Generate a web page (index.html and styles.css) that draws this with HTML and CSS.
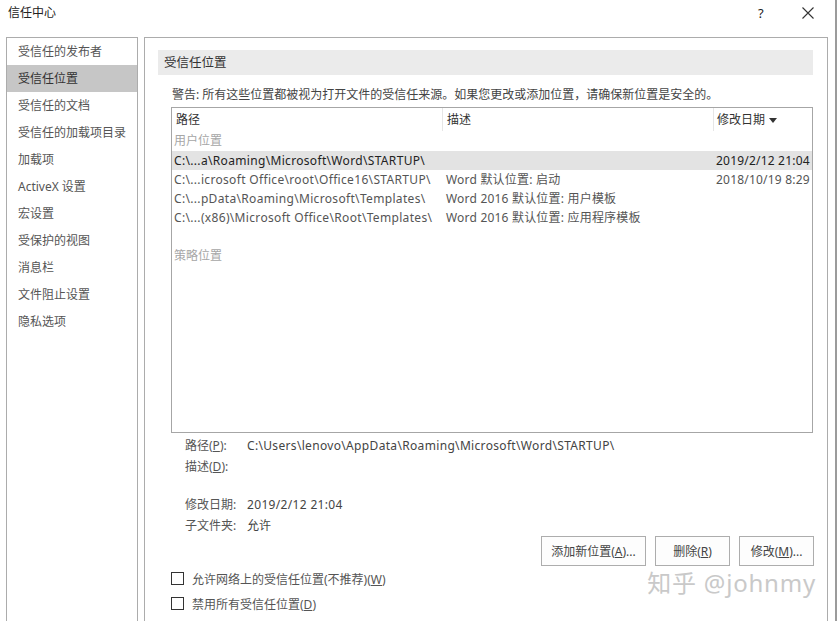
FILE: index.html
```html
<!DOCTYPE html>
<html lang="zh-CN">
<head>
<meta charset="utf-8">
<title>信任中心</title>
<link rel="stylesheet" href="styles.css">
</head>
<body>
<div class="window">
  <div class="titlebar">
    <span class="title">信任中心</span>
    <span class="help">?</span>
    <span class="close"><svg width="12" height="12" viewBox="0 0 12 12"><path d="M0.5 0.5L11.5 11.5M11.5 0.5L0.5 11.5" stroke="#333" stroke-width="1.1" fill="none"/></svg></span>
  </div>
  <div class="content">
    <nav class="nav">
      <div class="nav-item">受信任的发布者</div>
      <div class="nav-item active">受信任位置</div>
      <div class="nav-item">受信任的文档</div>
      <div class="nav-item">受信任的加载项目录</div>
      <div class="nav-item">加载项</div>
      <div class="nav-item">ActiveX 设置</div>
      <div class="nav-item">宏设置</div>
      <div class="nav-item">受保护的视图</div>
      <div class="nav-item">消息栏</div>
      <div class="nav-item">文件阻止设置</div>
      <div class="nav-item">隐私选项</div>
    </nav>
    <main class="main">
      <div class="section-head">受信任位置</div>
      <div class="warning">警告: 所有这些位置都被视为打开文件的受信任来源。如果您更改或添加位置，请确保新位置是安全的。</div>
      <div class="table">
        <div class="thead">
          <div class="th c1">路径</div>
          <div class="th c2">描述</div>
          <div class="th c3">修改日期 <svg class="sort" width="8" height="5" viewBox="0 0 8 5"><path d="M0 0H8L4 5Z" fill="#333"/></svg></div>
        </div>
        <div class="group">用户位置</div>
        <div class="row selected"><span class="c1">C:\...a\Roaming\Microsoft\Word\STARTUP\</span><span class="c2"></span><span class="c3">2019/2/12 21:04</span></div>
        <div class="row"><span class="c1">C:\...icrosoft Office\root\Office16\STARTUP\</span><span class="c2">Word 默认位置: 启动</span><span class="c3">2018/10/19 8:29</span></div>
        <div class="row"><span class="c1">C:\...pData\Roaming\Microsoft\Templates\</span><span class="c2">Word 2016 默认位置: 用户模板</span><span class="c3"></span></div>
        <div class="row"><span class="c1">C:\...(x86)\Microsoft Office\Root\Templates\</span><span class="c2">Word 2016 默认位置: 应用程序模板</span><span class="c3"></span></div>
        <div class="row blank"></div>
        <div class="group">策略位置</div>
      </div>
      <div class="details">
        <div class="drow"><span class="dlabel">路径(<u>P</u>):</span><span class="dval latin">C:\Users\lenovo\AppData\Roaming\Microsoft\Word\STARTUP\</span></div>
        <div class="drow"><span class="dlabel">描述(<u>D</u>):</span><span class="dval"></span></div>
        <div class="drow gap"><span class="dlabel">修改日期:</span><span class="dval latin">2019/2/12 21:04</span></div>
        <div class="drow"><span class="dlabel">子文件夹:</span><span class="dval">允许</span></div>
      </div>
      <div class="buttons">
        <button class="btn b-add">添加新位置(<u>A</u>)...</button>
        <button class="btn b-del">删除(<u>R</u>)</button>
        <button class="btn b-mod">修改(<u>M</u>)...</button>
        <span class="watermark">知乎 @johnmy</span>
      </div>
      <label class="check"><span class="box"></span><span>允许网络上的受信任位置(不推荐)(<u>W</u>)</span></label>
      <label class="check"><span class="box"></span><span>禁用所有受信任位置(<u>D</u>)</span></label>
    </main>
  </div>
</div>
</body>
</html>
```
FILE: styles.css
```css
* { box-sizing: border-box; }
html, body { margin: 0; padding: 0; background: #fff; }
body {
  font-family: "Noto Sans", "Noto Sans CJK SC", sans-serif;
  font-size: 12px;
  color: #444;
  width: 837px;
  height: 621px;
  overflow: hidden;
}
.window {
  width: 837px;
  height: 621px;
  border-right: 2px solid #9b9b9b;
  position: relative;
}
.titlebar {
  height: 37px;
  display: flex;
  align-items: flex-start;
  padding: 4px 0 0 8px;
  color: #222;
}
.title { font-size: 12px; line-height: 18px; }
.help { margin-left: auto; width: 12px; font-size: 13px; line-height: 18px; margin-right: 32px; color: #222; }
.close { width: 12px; margin-right: 21px; padding-top: 3px; display: flex; }
.content {
  display: flex;
  padding-left: 6px;
  height: 584px;
}
.nav {
  width: 132px;
  border: 1px solid #acacac;
  border-bottom: none;
  height: 600px;
}
.nav-item {
  height: 27px;
  line-height: 26px;
  padding-top: 1px;
  padding-left: 11px;
  color: #555;
}
.nav-item.active { background: #c6c6c6; color: #333; }
.main {
  margin-left: 6px;
  width: 684px;
  border: 1px solid #acacac;
  border-bottom: none;
  height: 600px;
  padding: 12px 14px 0 13px;
}
.section-head {
  height: 25px;
  background: #ebebeb;
  line-height: 25px;
  padding-left: 6px;
  color: #333;
  font-size: 12.5px;
}
.warning {
  margin: 8px 0 0 14px;
  height: 24px;
  line-height: 24px;
  color: #444;
}
.table {
  margin-left: 13px;
  height: 326px;
  border: 1px solid #a6a6a6;
}
.thead {
  display: flex;
  height: 23px;
  line-height: 23px;
  color: #333;
}
.th.c1 { width: 271px; padding-left: 4px; border-right: 1px solid #e6e6e6; }
.th.c2 { width: 271px; padding-left: 4px; border-right: 1px solid #e6e6e6; }
.th.c3 { flex: 1; padding-left: 3px; display: flex; align-items: center; gap: 4px; }
.sort { margin-top: 1px; }
.group {
  height: 20px;
  line-height: 20px;
  padding-left: 2px;
  color: #a6a6a6;
}
.row {
  display: flex;
  height: 19px;
  line-height: 19px;
  color: #555;
  white-space: nowrap;
}
.row.selected { background: #e3e3e3; color: #222; }
.row .c1 { width: 272px; padding-left: 2px; overflow: hidden; letter-spacing: 0.33px; }
.row .c2 { width: 271px; padding-left: 2px; letter-spacing: 0.2px; }
.row .c3 { flex: 1; padding-left: 1px; letter-spacing: 0.2px; }
.details {
  margin: 2px 0 0 27px;
}
.drow { display: flex; height: 21px; line-height: 21px; }
.drow.gap { margin-top: 17px; }
.dlabel { width: 62px; color: #555; }
.dval { color: #444; }
.dval.latin { letter-spacing: 0.33px; }
.buttons {
  display: flex;
  justify-content: flex-end;
  gap: 9px;
  margin-top: 0;
  margin-right: -1px;
  position: relative;
  height: 30px;
}
.btn {
  font: inherit;
  color: #444;
  background: #fdfdfd;
  border: 1px solid #adadad;
  height: 30px;
  padding: 0;
}
.b-add { width: 105px; }
.b-del { width: 75px; }
.b-mod { width: 75px; }
.watermark {
  position: absolute;
  right: -2px;
  top: 28px;
  font-size: 24px;
  color: #c9c9c9;
  letter-spacing: 0.8px;
  text-shadow: 0 0 1px #fff;
  white-space: nowrap;
}
.check {
  display: flex;
  align-items: center;
  margin-left: 13px;
  height: 25px;
  color: #555;
}
.box {
  width: 13px;
  height: 13px;
  border: 1px solid #333;
  margin-right: 8px;
  background: #fff;
}
u { text-decoration: underline; }
```
